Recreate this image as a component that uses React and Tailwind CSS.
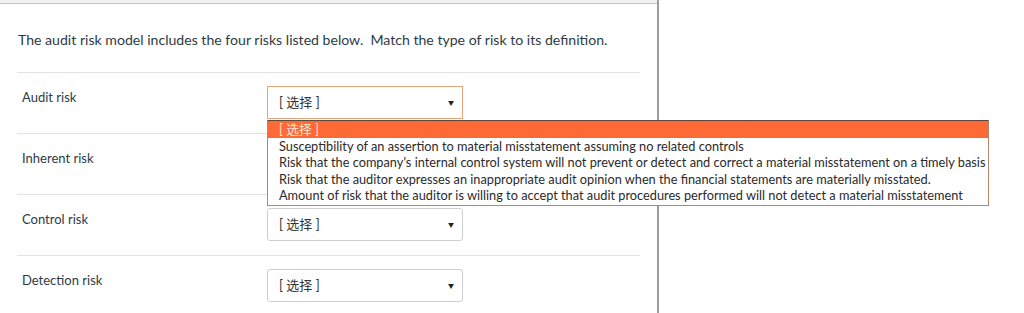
import React from 'react';

const rows = ['Audit risk', 'Inherent risk', 'Control risk', 'Detection risk'];

const options = [
    'Susceptibility of an assertion to material misstatement assuming no related controls',
    "Risk that the company's internal control system will not prevent or detect and correct a material misstatement on a timely basis",
    'Risk that the auditor expresses an inappropriate audit opinion when the financial statements are materially misstated.',
    'Amount of risk that the auditor is willing to accept that audit procedures performed will not detect a material misstatement',
];

const font = { fontFamily: 'Lato, "Noto Sans CJK SC", sans-serif' };

const Select = ({ active }) => (
    <div
        className={`w-[196px] h-[33px] flex items-center justify-between pl-[11px] pr-[8px] text-[13px] text-[#333] bg-white ${
            active ? 'border border-[#e9a47c]' : 'border border-[#cfcfcf] rounded-[3px]'
        }`}
    >
        <span className="pt-[1px]">[ 选择 ]</span>
        <span className="text-[6px] text-[#222]">▼</span>
    </div>
);

const App = () => {
    return (
        <div className="w-[1024px] h-[313px] bg-white overflow-hidden relative" style={font}>
            <div className="w-[659px] h-[313px] border-r-2 border-[#9c9c9c]">
                {/* top strip */}
                <div className="h-[4px] bg-[#efefef] border-b border-[#c4c4c4]" />

                <p className="pl-[18px] pt-[26px] text-[14.1px] leading-[20px] text-[#2d3b45]">
                    The audit risk model includes the four risks listed below.&nbsp; Match the type of risk to its definition.
                </p>

                <div className="mx-[17px] mt-[22px] w-[623px]">
                    {rows.map((label, i) => (
                        <div key={label} className="flex border-t border-[#e2e2e2] h-[61px]">
                            <div className="w-[250px] pl-[5px] pt-[15px] text-[13px] leading-[18px] text-[#2d3b45]">
                                {label}
                            </div>
                            <div className="pt-[13px]">
                                <Select active={i === 0} />
                            </div>
                        </div>
                    ))}
                </div>
            </div>

            {/* open dropdown list */}
            <div className="absolute left-[267px] top-[120px] w-[722px] bg-white border border-[#b5876a] border-t-[#5a4a42] text-[12.75px] leading-[16.4px] text-[#2a2a2a]">
                <div className="h-[17px] bg-[#fd6a36] pl-[11px] text-[#fde5d2] leading-[17px]">[ 选择 ]</div>
                <div className="pl-[11px] pb-[1px]">
                    {options.map((o) => (
                        <div key={o} className="whitespace-nowrap">{o}</div>
                    ))}
                </div>
            </div>
        </div>
    );
};

export default App;
